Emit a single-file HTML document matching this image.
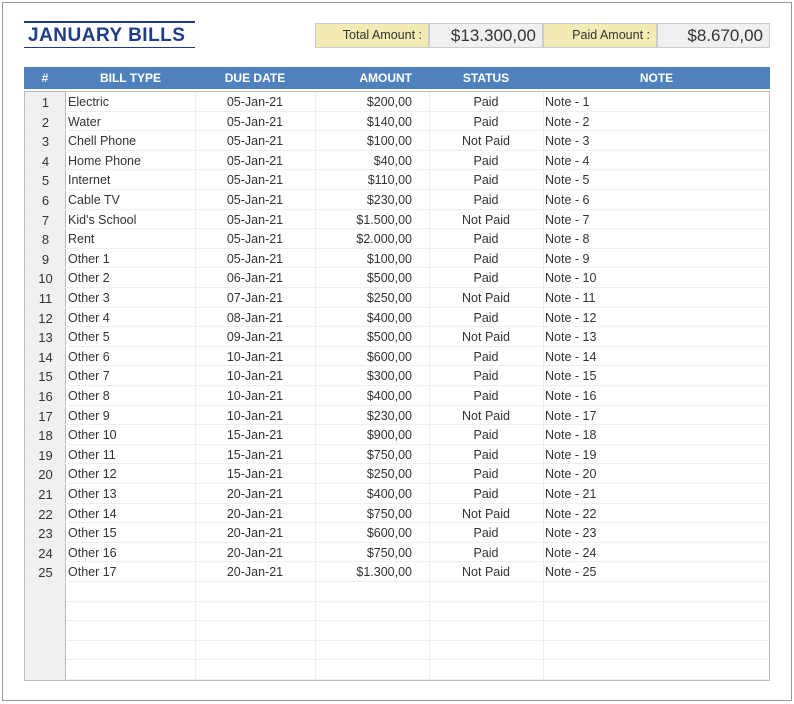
<!DOCTYPE html>
<html><head><meta charset="utf-8"><style>
*{margin:0;padding:0;box-sizing:border-box}
body{width:794px;height:704px;background:#fff;font-family:"Liberation Sans",sans-serif;position:relative;overflow:hidden;color:#333}
.frame{position:absolute;left:2px;top:2px;width:790px;height:699px;border:1px solid #999}
.title{position:absolute;left:24px;top:21px;width:171px;height:27px;border-top:2px solid #1f3c88;border-bottom:1.5px solid #1f3c88;color:#1f3c88;font-weight:bold;font-size:19px;line-height:25px;padding-left:4px;letter-spacing:0.5px}
.sum{position:absolute;top:23px;height:25px;border:1px solid #ccc;font-size:12.5px;line-height:23px;text-align:right;padding-right:6px}
.lab{background:#f2ebb3}
.val{background:#f0f0f0;font-size:17px}
.hdr{position:absolute;left:24px;top:67px;width:746px;height:22px;background:#4f81bd;color:#fff;font-weight:bold;font-size:12px;line-height:22px}
.hdr div,.row div{position:absolute;top:0}
.body{position:absolute;left:24px;top:91px;width:746px;height:590px;border:1px solid #bbb}
.numcol{position:absolute;left:0;top:0;width:41px;height:588px;background:#f0f0f0;border-right:1px solid #bbb}
.row{position:absolute;left:0;width:744px;height:19.6px;border-bottom:1px solid #eee;font-size:12.5px;line-height:21px}
.vl{position:absolute;top:0;width:1px;height:588px;background:#eee}
</style></head><body>
<div class="frame"></div>
<div class="title">JANUARY BILLS</div>
<div class="sum lab" style="left:315px;width:114px">Total Amount :</div>
<div class="sum val" style="left:429px;width:114px">$13.300,00</div>
<div class="sum lab" style="left:543px;width:114px">Paid Amount :</div>
<div class="sum val" style="left:657px;width:113px">$8.670,00</div>
<div class="hdr">
<div style="left:0;width:42px;text-align:center">#</div>
<div style="left:42px;width:129px;text-align:center">BILL TYPE</div>
<div style="left:171px;width:120px;text-align:center">DUE DATE</div>
<div style="left:291px;width:97px;text-align:right">AMOUNT</div>
<div style="left:405px;width:114px;text-align:center">STATUS</div>
<div style="left:519px;width:227px;text-align:center">NOTE</div>
</div>
<div class="body" id="b"><div class="numcol"></div>
<div class="vl" style="left:170px"></div><div class="vl" style="left:290px"></div><div class="vl" style="left:404px"></div><div class="vl" style="left:518px"></div>
<script>
var d=[["Electric","05-Jan-21","$200,00","Paid"],["Water","05-Jan-21","$140,00","Paid"],["Chell Phone","05-Jan-21","$100,00","Not Paid"],["Home Phone","05-Jan-21","$40,00","Paid"],["Internet","05-Jan-21","$110,00","Paid"],["Cable TV","05-Jan-21","$230,00","Paid"],["Kid's School","05-Jan-21","$1.500,00","Not Paid"],["Rent","05-Jan-21","$2.000,00","Paid"],["Other 1","05-Jan-21","$100,00","Paid"],["Other 2","06-Jan-21","$500,00","Paid"],["Other 3","07-Jan-21","$250,00","Not Paid"],["Other 4","08-Jan-21","$400,00","Paid"],["Other 5","09-Jan-21","$500,00","Not Paid"],["Other 6","10-Jan-21","$600,00","Paid"],["Other 7","10-Jan-21","$300,00","Paid"],["Other 8","10-Jan-21","$400,00","Paid"],["Other 9","10-Jan-21","$230,00","Not Paid"],["Other 10","15-Jan-21","$900,00","Paid"],["Other 11","15-Jan-21","$750,00","Paid"],["Other 12","15-Jan-21","$250,00","Paid"],["Other 13","20-Jan-21","$400,00","Paid"],["Other 14","20-Jan-21","$750,00","Not Paid"],["Other 15","20-Jan-21","$600,00","Paid"],["Other 16","20-Jan-21","$750,00","Paid"],["Other 17","20-Jan-21","$1.300,00","Not Paid"]];
var h="";
for(var i=0;i<30;i++){var t=i*19.6;
if(i<25){var r=d[i];h+='<div class="row" style="top:'+t+'px"><div style="left:0;width:41px;text-align:center;font-size:13px">'+(i+1)+'</div><div style="left:43px">'+r[0]+'</div><div style="left:170px;width:120px;text-align:center">'+r[1]+'</div><div style="left:290px;width:97px;text-align:right">'+r[2]+'</div><div style="left:404px;width:114px;text-align:center">'+r[3]+'</div><div style="left:520px">Note - '+(i+1)+'</div></div>';}
else h+='<div class="row" style="left:42px;width:702px;top:'+t+'px"></div>';}
document.getElementById("b").insertAdjacentHTML("beforeend",h);
</script>
</div>
</body></html>
